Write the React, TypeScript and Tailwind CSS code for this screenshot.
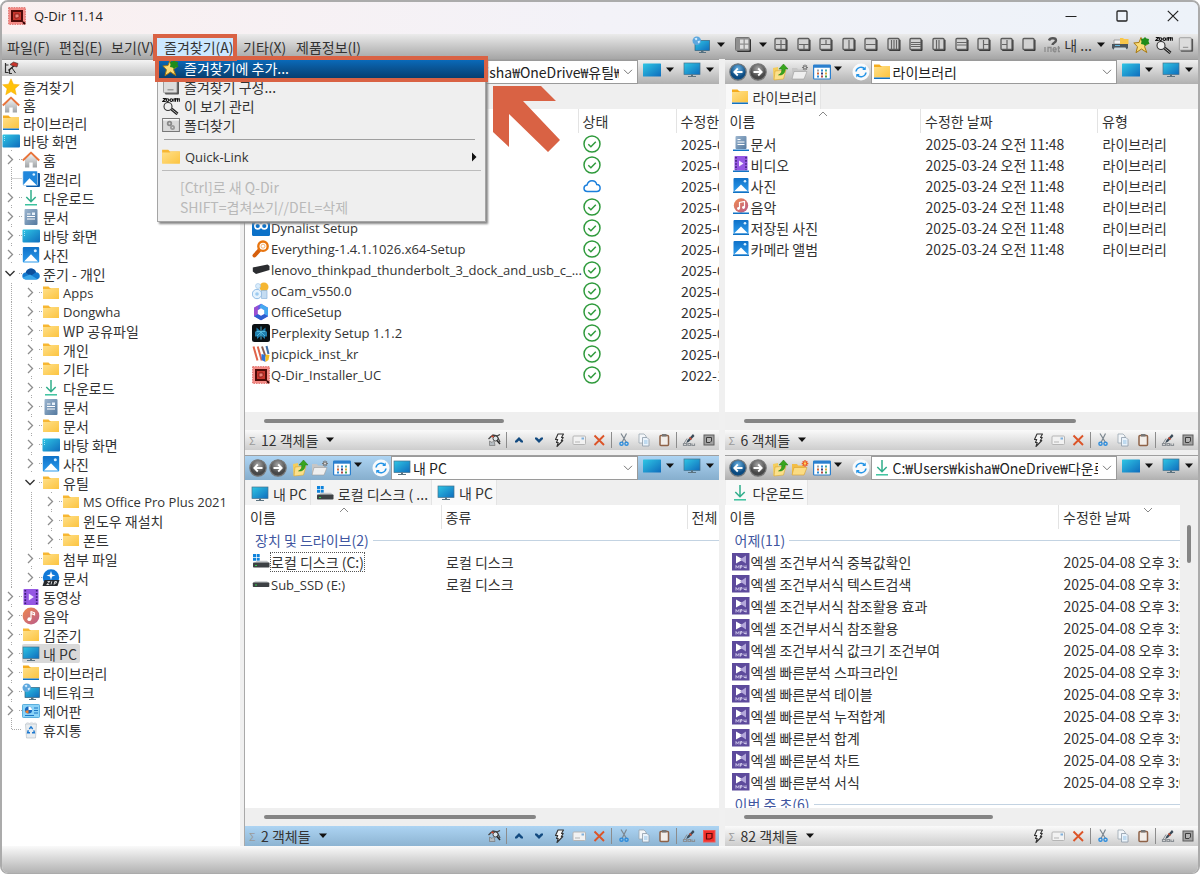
import type { ReactNode } from "react";
import clsx from "clsx";

const glyphs: Record<string, ReactNode> = {
  star: (
    <path d="M9 .8l2.400 5.400 6 .6-4.500 4 1.300 5.900L9 13.600l-5.200 3.100 1.300-5.900-4.500-4 6-.6z" fill="#ffc20a" stroke="#f7a800" strokeWidth=".5" />
  ),
  home: (
    <>
      <path d="M3 8v8.500h4.300v-5h3.400v5H15V8L9 2.500z" fill="url(#g-wall)" />
      <path d="M.8 9.500L9 1.600l8.200 7.900" fill="none" stroke="#e8743b" strokeWidth="2" strokeLinejoin="round" />
    </>
  ),
  folder: (
    <>
      <path d="M1 2.500h5.500l1.500 1.500H17V14H1z" fill="#f7b733" />
      <path d="M1 5h7l1-1h8v11H1z" fill="url(#g-folder)" />
    </>
  ),
  library: (
    <>
      <path d="M1 1.500h5.500L8 3h9v10H1z" fill="#f5ac1d" />
      <path d="M1 4h7l1-1h8v11.500H1z" fill="url(#g-folder)" />
      <path d="M1 14.500h16v1.500H1z" fill="#1273c4" />
    </>
  ),
  desktop: (
    <>
      <rect x=".5" y="2.500" width="17.500" height="13" rx="1" fill="url(#g-screen)" />
      <path d="M2 4.500h1M2 6.500h1M2 8.500h1" stroke="#bdf0ff" strokeWidth=".8" />
    </>
  ),
  panel: <rect x="0" y="2.500" width="18" height="13" rx=".6" fill="url(#g-screen)" />,
  monitor: (
    <>
      <rect x="1" y="2" width="16" height="11.500" fill="url(#g-screen)" stroke="#45718c" strokeWidth=".7" />
      <path d="M8 13.500h2v1.500h3v1H5v-1h3z" fill="#5c7380" />
    </>
  ),
  gallery: (
    <>
      <rect x="4" y="3" width="14" height="14" rx="1" fill="#0b5aa9" />
      <rect x=".8" y="1" width="14.700" height="14.500" rx="1" fill="#2087dc" stroke="#fff" strokeWidth=".5" />
      <path d="M1.200 15l6.300-6.800 7 6.800z" fill="#fff" />
      <circle cx="11.800" cy="4.500" r="1.300" fill="#d9f0ff" />
    </>
  ),
  picture: (
    <>
      <rect x=".8" y="1" width="16.400" height="15.500" rx="1" fill="url(#g-photo)" />
      <path d="M2 15.500l7-7.300 7 7.300z" fill="#fff" />
      <circle cx="13.300" cy="4.700" r="1.500" fill="#d9f0ff" />
    </>
  ),
  photolib: (
    <>
      <rect x="1.500" y="1" width="15" height="13.500" rx="1" fill="url(#g-photo)" />
      <path d="M2.500 14L9 7.500l6.500 6.500z" fill="#fff" />
      <circle cx="13" cy="4.300" r="1.300" fill="#d9f0ff" />
      <path d="M1 14.500h16v1.500H1z" fill="#1273c4" />
    </>
  ),
  download: (
    <>
      <path d="M9 1v11.500M4.300 8L9 12.700 13.700 8" fill="none" stroke="#2fae8b" strokeWidth="1.500" />
      <path d="M3 15.800h12" stroke="#3cc19e" strokeWidth="1.500" />
    </>
  ),
  doc: (
    <>
      <rect x="2.500" y="1" width="13" height="16" rx="1" fill="url(#g-doc)" />
      <path d="M5 6h3.500M5 8.500h8M5 11h8" stroke="#fff" strokeWidth="1.100" />
      <path d="M10 4.500h3v2.500h-3z" fill="#e8f1fa" />
    </>
  ),
  doclib: (
    <>
      <rect x="3.500" y="1" width="11" height="13" rx="1" fill="url(#g-doc)" />
      <path d="M5.500 4.500h3M5.500 7h7M5.500 9.500h7" stroke="#fff" />
      <path d="M1 14.500h16v1.500H1z" fill="#1273c4" />
    </>
  ),
  cloud: (
    <>
      <path d="M4.500 14.500C2 14.500.3 13 .3 11c0-2 1.500-3.300 3.400-3.400C4.600 5 6.600 3.600 9 3.600c2.300 0 4.300 1.400 5 3.600 2.200 0 3.800 1.700 3.800 3.700 0 2-1.600 3.600-3.800 3.600z" fill="#1479ce" />
      <path d="M3.700 7.600C4.600 5 6.600 3.600 9 3.600c2.300 0 4.300 1.400 5 3.600L8.500 11z" fill="#0d4f9c" />
      <path d="M4.500 14.500c-1.500 0-3-.6-3.800-2L8 9.500l7.500 4.800-1.500.2z" fill="#38a6ea" />
    </>
  ),
  zip: (
    <>
      <circle cx="9" cy="8.500" r="8.200" fill="#1179d8" />
      <path d="M9 2l1.100 3.400L13.500 6.500l-3.400 1.100L9 11 7.900 7.600 4.500 6.500l3.400-1.100z" fill="#fff" />
      <path d="M2.500 11h15l-2 6h-15z" fill="#25292d" />
      <path d="M5.500 12.500h2.300l-3 3h2.500M9.800 12.300l-.8 3.300M12 15.700l.8-3.200h1.700l-.3 1.600h-1.800" fill="none" stroke="#fff" strokeWidth=".8" />
    </>
  ),
  video: (
    <>
      <rect x="1.500" y="1" width="15" height="16" rx=".8" fill="#9557e3" />
      <path d="M3.300 2v14.500M14.700 2v14.500" stroke="#3b1c74" strokeWidth="1.700" strokeDasharray="1.600 1.500" />
      <path d="M6.800 5.500l5 3.500-5 3.500z" fill="#f3e9ff" />
    </>
  ),
  videolib: (
    <>
      <rect x="2.500" y="0" width="13" height="14.500" rx=".8" fill="#9557e3" />
      <path d="M4 1v13M14 1v13" stroke="#3b1c74" strokeWidth="1.500" strokeDasharray="1.600 1.500" />
      <path d="M7 4.500l4.500 3-4.500 3z" fill="#f3e9ff" />
      <path d="M1 14.500h16v1.500H1z" fill="#1273c4" />
    </>
  ),
  music: (
    <>
      <circle cx="9" cy="9" r="8.400" fill="url(#g-music)" />
      <path d="M9 4.200v7.800M9 4.500l3.500 1.300v2L9 6.500" fill="none" stroke="#fff" strokeWidth="1.200" />
      <circle cx="7.300" cy="12.200" r="1.900" fill="#fff" />
    </>
  ),
  musiclib: (
    <>
      <circle cx="9" cy="7.500" r="7.200" fill="url(#g-music)" />
      <path d="M7.500 10.500V4.500l5-1v6" fill="none" stroke="#fff" strokeWidth="1.200" />
      <circle cx="6.500" cy="10.500" r="1.400" fill="#fff" />
      <circle cx="11.500" cy="9.500" r="1.400" fill="#fff" />
      <path d="M1 14.500h16v1.500H1z" fill="#1273c4" />
    </>
  ),
  network: (
    <>
      <rect x="3" y="4.500" width="14.500" height="10" fill="url(#g-screen)" stroke="#33617d" strokeWidth=".7" />
      <path d="M9 14.500h2.500v1.500H14v1H7v-1h2z" fill="#55707f" />
      <circle cx="4.800" cy="4.800" r="4.300" fill="#5da7de" />
      <path d="M2.500 2.500l2-.8 1 1.300-1.500 1.500zM5.500 5.500l2-1 .5 1.500-1.500 1.500z" fill="#d6efff" />
    </>
  ),
  control: (
    <>
      <rect x=".5" y="2.500" width="17" height="13" rx=".8" fill="#8bd3f7" stroke="#3f9fd6" strokeWidth=".8" />
      <circle cx="6.500" cy="8" r="3.600" fill="#1769c0" />
      <path d="M6.500 8V4.400A3.600 3.600 0 0 1 10 8z" fill="#fff" />
      <path d="M6.500 8l-3.400 1A3.600 3.600 0 0 0 6.500 11.600z" fill="#f07f2d" />
      <path d="M12 6h4M12 8.500h4M12 11h4M3 13.500h9" stroke="#1b77c5" strokeWidth="1.100" />
    </>
  ),
  recycle: (
    <>
      <path d="M3.500 3h11l-1 14h-9z" fill="#e9edf0" stroke="#b9c2c8" strokeWidth=".7" />
      <path d="M4 2.500l1.500-1 2 .8 2-1 2 1 2-.6.800 1z" fill="#f6f7f8" stroke="#c4cbd0" strokeWidth=".5" />
      <path d="M7.300 8L9 5.800 10.700 8M11.800 9.300l.6 2.400H10M8 11.800H5.600l.7-2.500" fill="none" stroke="#1b78d0" strokeWidth="1.400" />
    </>
  ),
  diskc: (
    <>
      <path d="M1 1h3v3H1zM4.700 1h3v3h-3zM1 4.700h3v3H1zM4.700 4.700h3v3h-3z" fill="#0e83dc" />
      <path d="M3 9.500l2-1.700h10l2 2z" fill="#c5c8ca" />
      <rect x="1" y="9.500" width="16.500" height="5" rx=".8" fill="#3d4144" />
      <path d="M3 12.500h2" stroke="#35d04c" strokeWidth="1.200" />
    </>
  ),
  diske: (
    <>
      <path d="M1 8l2-1.700h12L17 8z" fill="#c5c8ca" />
      <rect x=".8" y="7.500" width="16.500" height="4.500" rx=".8" fill="#3d4144" />
      <path d="M3 10h2" stroke="#35d04c" strokeWidth="1.200" />
    </>
  ),
  mp4: (
    <>
      <rect x="0" y="0" width="17.500" height="17.500" fill="#5d4a9c" />
      <path d="M4 2.500l7 4-7 4z" fill="#fff" />
      <path d="M14 2.500v8l-6-4z" fill="#b3a7da" />
      <path d="M4 15.500v-3l1.500 2 1.500-2v3M8.500 15.500v-3H10v1.500H8.500M12 12.500v2h2.500M14 12.300v3.200" fill="none" stroke="#d4cdec" strokeWidth=".9" />
    </>
  ),
  qdir: (
    <>
      <rect x=".7" y=".7" width="16.600" height="16.600" fill="#f58d88" stroke="#dc6a64" strokeDasharray="1.500 1" />
      <rect x="4" y="4" width="10" height="10" fill="#c8372f" stroke="#4f0b08" strokeWidth="2" />
      <path d="M7 7h4v2.500L9.500 11H7z" fill="#f0857d" stroke="#7c1813" strokeWidth=".8" />
      <path d="M15 15l2 2" stroke="#300" strokeWidth="2" />
    </>
  ),
  dynalist: (
    <>
      <rect x="0" y="0" width="18" height="17" rx="1.500" fill="#0c71c8" />
      <circle cx="5.700" cy="7" r="2.900" fill="none" stroke="#fff" strokeWidth="1.600" />
      <circle cx="12.300" cy="7" r="2.900" fill="none" stroke="#fff" strokeWidth="1.600" />
    </>
  ),
  everything: (
    <>
      <path d="M7.500 10L2.500 15.500" stroke="#d65f0c" strokeWidth="4" strokeLinecap="round" />
      <circle cx="11" cy="6.200" r="4.700" fill="#fff" stroke="#e8750f" strokeWidth="2.400" />
      <circle cx="11" cy="6.200" r="2" fill="none" stroke="#f2a25c" strokeWidth=".8" />
    </>
  ),
  dock: <path d="M.8 6.500L15.500 3.500l2 1.500v4L4 13 .8 10.500z" fill="#2b2d30" />,
  ocam: (
    <>
      <circle cx="12" cy="5" r="4.500" fill="#f5b632" />
      <circle cx="6" cy="4" r="2.500" fill="#d9ecfb" stroke="#9fc4e6" strokeWidth=".6" />
      <circle cx="5" cy="12" r="4.700" fill="#e4f2fd" stroke="#86b5e2" strokeWidth=".9" />
      <circle cx="5" cy="12" r="1.800" fill="#9ccaf0" />
      <path d="M9.500 8.500h5.500v8H9.500z" fill="#c4dcf2" stroke="#8fb6dc" strokeWidth=".7" />
    </>
  ),
  office: (
    <>
      <path d="M9 .8l7 4v8.400l-7 4-7-4V4.800z" fill="#6a5be0" />
      <path d="M9 .8l7 4v8.400l-4-2.200V7L7.500 4.500z" fill="#46a9f0" />
      <path d="M2 13.200l7 4 7-4-4-2.200-3 1.700-3-1.700z" fill="#2d5fcf" />
      <path d="M2 13.200V4.800L6 2.500v8.500z" fill="#9a4fd0" />
      <path d="M9 5.300L12.200 7.200v3.700L9 12.700l-3.200-1.800V7.200z" fill="#fff" />
    </>
  ),
  perplexity: (
    <>
      <rect x="0" y="0" width="18" height="18" rx="2.500" fill="#0b1114" />
      <path d="M4.500 3.500L9 7.500l4.500-4v4H15v5h-2V15l-4-3.500L5 15v-2.500H3v-5h1.500z" fill="#1f7fae" />
      <path d="M9 2.500v13M4.500 7.500h9M5 12l4-4 4 4" fill="none" stroke="#59bde0" strokeWidth=".9" />
    </>
  ),
  picpick: (
    <>
      <path d="M1.500 1.500l4 14M5.700 1.500l4 14" stroke="#e0644a" strokeWidth="2" />
      <path d="M10 1.500l3.500 10" stroke="#8a5f52" strokeWidth="2" />
      <path d="M14.500 1l2 8" stroke="#3f6ea8" strokeWidth="2" />
      <path d="M9.500 9l4 1v7l-4-2z" fill="#2f74d8" />
      <path d="M13.500 9.500l4 .5-1 5-3 2z" fill="#f4bd1f" />
    </>
  ),
  check: (
    <>
      <circle cx="9" cy="9" r="8" fill="#fff" stroke="#2f9a3c" strokeWidth="1.500" />
      <path d="M5.300 9.300l2.600 2.500 4.900-5" fill="none" stroke="#2f9a3c" strokeWidth="1.500" />
    </>
  ),
  online: (
    <path d="M4.500 14.500c-2 0-3.500-1.300-3.500-3.200 0-1.800 1.300-3 3-3.200C4.700 5.500 6.600 3.800 9 3.800c2.300 0 4.200 1.500 4.800 3.800 1.900.1 3.300 1.500 3.300 3.400 0 2-1.500 3.500-3.500 3.500z" fill="#fff" stroke="#1b7fdc" strokeWidth="1.500" />
  ),
  back: (
    <>
      <circle cx="9" cy="9" r="8.200" fill="url(#g-orb)" stroke="#70767b" strokeWidth="1.200" />
      <path d="M13.500 9h-7M8.800 5.500L5.300 9l3.500 3.500" fill="none" stroke="#fff" strokeWidth="1.800" />
    </>
  ),
  backgray: (
    <>
      <circle cx="9" cy="9" r="8.200" fill="url(#g-orbgray)" stroke="#777" strokeWidth="1.200" />
      <path d="M13.500 9h-7M8.800 5.500L5.300 9l3.500 3.500" fill="none" stroke="#fff" strokeWidth="1.800" />
    </>
  ),
  forward: (
    <>
      <circle cx="9" cy="9" r="8.200" fill="url(#g-orbgray)" stroke="#777" strokeWidth="1.200" />
      <path d="M4.500 9h7M9.200 5.500L12.700 9l-3.500 3.500" fill="none" stroke="#fff" strokeWidth="1.800" />
    </>
  ),
  up: (
    <>
      <path d="M2 5l5-1 1.500 12L2.500 17z" fill="#f5cd5b" />
      <path d="M4 8l11-1-2.500 9-9.500 1z" fill="#fbe08a" stroke="#d8a735" strokeWidth=".6" />
      <path d="M7.500 12c2.500-1 3.500-3 3.300-6H8l4.500-5L17 6h-2.800c0 4-2.500 6.500-6.700 6z" fill="#38a51e" stroke="#1e7a10" strokeWidth=".5" />
    </>
  ),
  newgray: (
    <>
      <path d="M1 5h5l1 1.500h6V15H1z" fill="#c6c6c6" />
      <path d="M3 8.500h13L13 16H1z" fill="#efefef" stroke="#9a9a9a" strokeWidth=".6" />
      <path d="M14 1.500v6M11 4.500h6M12 2.500l4 4M16 2.500l-4 4" stroke="#777" strokeWidth="1.100" />
      <circle cx="14" cy="4.500" r="1" fill="#ddd" />
    </>
  ),
  newfolder: (
    <>
      <path d="M1 5h5l1 1.500h6V15H1z" fill="#f3bd44" />
      <path d="M3 8.500h13L13 16H1z" fill="#fbdc83" stroke="#d89f2c" strokeWidth=".6" />
      <path d="M14 1v7M10.700 4.500h6.600M11.700 2.200l4.600 4.600M16.300 2.200l-4.600 4.600" stroke="#ec5a21" strokeWidth="1.300" />
      <circle cx="14" cy="4.500" r="1.200" fill="#ffd25b" />
    </>
  ),
  view: (
    <>
      <rect x=".6" y="2" width="16.800" height="14" rx=".8" fill="#fff" stroke="#2a7fce" strokeWidth="1.200" />
      <path d="M.6 2h16.800v2.700H.6z" fill="#2a7fce" />
      <path d="M4 6.500h2v2H4z" fill="#9aa3ad" />
      <path d="M8 6.500h2v2H8z" fill="#2d8ad6" />
      <path d="M12 6.500h2v2h-2z" fill="#48a7a0" />
      <path d="M4 9.500h2v2H4z" fill="#d06434" />
      <path d="M8 9.500h2v2H8z" fill="#333d7a" />
      <path d="M12 9.500h2v2h-2z" fill="#d7a63c" />
      <path d="M4 12.500h2v2H4z" fill="#2d8ad6" />
      <path d="M8 12.500h2v2H8z" fill="#b04444" />
      <path d="M12 12.500h2v2h-2z" fill="#3f9d54" />
    </>
  ),
  refresh: (
    <>
      <circle cx="9" cy="9" r="8.500" fill="#f8fafc" />
      <path d="M4 8.500a5 5 0 0 1 9-2.200M14 9.500a5 5 0 0 1-9 2.200" fill="none" stroke="#2494e6" strokeWidth="1.500" />
      <path d="M13.700 3.500v3.500h-3.500zM4.300 14.500V11h3.500z" fill="#2494e6" />
    </>
  ),
  find: (
    <>
      <path d="M3.500 8L8 4l4 1 3-1.500M12 5l3 6M5 6l4-2" stroke="#444" strokeWidth="1.300" fill="none" />
      <circle cx="10.500" cy="7.500" r="2.500" fill="#dfe6ea" stroke="#333" strokeWidth=".9" />
      <path d="M12 9.500l3 3.500" stroke="#222" strokeWidth="1.400" />
      <path d="M4.500 14.500V10l2.500 1.500L9 9.500l1 5z" fill="#b4bbc0" stroke="#777" strokeWidth=".7" />
      <path d="M6.500 5l2 1" stroke="#c8452c" strokeWidth="1.600" />
    </>
  ),
  chevup: <path d="M5 11.500V10l4-4 4 4v1.500H11L9 9.500l-2 2z" fill="#124a80" />,
  chevdown: <path d="M5 6.500V8l4 4 4-4V6.500H11L9 8.500l-2-2z" fill="#124a80" />,
  bolt: (
    <path d="M8 3h5.500l-2 3.500h1.800l-2 3h1.500L7 15.500l1.200-4H6.500L7.700 8.500H5.500z" fill="#f5f5f5" stroke="#333" strokeWidth="1.100" strokeLinejoin="round" />
  ),
  mail: (
    <>
      <rect x="3" y="5" width="12.500" height="8.500" rx="1" fill="#f2f2f2" stroke="#b5b5b5" />
      <path d="M11.500 6.500h2.500v2h-2.500z" fill="#7fb0dc" />
      <path d="M5 11h5" stroke="#b5b5b5" />
    </>
  ),
  cross: <path d="M4.500 4.500l9.500 9.500M14 4.500L4.500 14" stroke="#dc5428" strokeWidth="1.900" />,
  cut: (
    <>
      <path d="M6 2.500l5.500 9M11.500 2.500L7 11.500" stroke="#7c8790" strokeWidth="1.200" />
      <circle cx="6.500" cy="12.700" r="1.600" fill="none" stroke="#2a8bdc" strokeWidth="1.400" />
      <circle cx="11.500" cy="12.700" r="1.600" fill="none" stroke="#2a8bdc" strokeWidth="1.400" />
    </>
  ),
  copy: (
    <>
      <path d="M4 3h5l2 2v7H4z" fill="#f3f6f9" stroke="#9ba7b1" strokeWidth=".8" />
      <path d="M7.500 6.500h4.500l2 2V15H7.500z" fill="#eaf3fb" stroke="#8d9ba8" strokeWidth=".8" />
      <path d="M9 10h3.500M9 12h3.500" stroke="#7db4e0" strokeWidth=".8" />
    </>
  ),
  paste: (
    <>
      <rect x="5" y="4.500" width="8.500" height="10" rx="1" fill="#f2eeea" stroke="#8e6247" strokeWidth="1.500" />
      <rect x="7" y="3" width="4.500" height="2.500" fill="#777" />
    </>
  ),
  pen: (
    <>
      <path d="M13 3L7.500 9l-1.300 3 2.800-1.300L14.500 5z" fill="#3a4a58" />
      <path d="M9.500 6.500l2 2" stroke="#d2492e" strokeWidth="1.500" />
      <path d="M7 7.500l-3 5" stroke="#8a8f94" strokeWidth="1" />
      <path d="M3.500 14.500v-2h3v2zM8 14.500v-2h2.500v2zM12 12.500v2h2.500v-2" stroke="#8a8f94" strokeWidth="1.200" fill="none" />
    </>
  ),
  box: (
    <>
      <rect x="4" y="4" width="10" height="10" fill="#a2a2a2" stroke="#5c5c5c" />
      <path d="M6.500 6.500h5v3.500L10 11.500H6.500z" fill="#b4b4b4" stroke="#3c3c3c" />
    </>
  ),
  boxred: (
    <>
      <rect x="3.500" y="3.500" width="11.500" height="11.500" fill="#f3312c" stroke="#ef5b56" />
      <path d="M6.500 6.500H12v4.500L10 12H6.500z" fill="none" stroke="#5f0907" strokeWidth="1.200" />
    </>
  ),
  staradd: (
    <>
      <path d="M8 1.500l1.800 5 6.200.3-4.500 3.700 2.300 6-5.300-3.500-5.500 3.700 1.500-6L.8 7l5.200-.5z" fill="#fbdc78" stroke="#a8780f" strokeWidth="1" />
      <path d="M12 1l1.500 1.500L16 3l-.5 2.500 1 2.500-3 .5L12 10l-1.500-1.500L8 8l.5-2.500L8 3l2.500-.5z" fill="#1f8c1b" />
    </>
  ),
  pad: (
    <>
      <rect x="3" y="2" width="14" height="14.500" rx="1" fill="#555" />
      <rect x="1.500" y=".8" width="13.500" height="14" rx="1" fill="#dcdcdc" stroke="#8c8c8c" strokeWidth=".8" />
      <path d="M5.500 11h6v1.500h-6z" fill="#9c9c9c" />
    </>
  ),
  zoom: (
    <>
      <path d="M.8 1.500h2.800L.8 4.500h3M5.500 1.700a1.300 1.400 0 1 0 .1 0M9.300 1.700a1.300 1.400 0 1 0 .1 0M12 4.800V2l1.500-.3v3M13.500 2l2-.3v3M15.500 2l1.800-.2v3" fill="none" stroke="#111" strokeWidth="1.100" />
      <circle cx="6" cy="9.500" r="4" fill="#eee" stroke="#333" strokeWidth="1.100" />
      <path d="M9.500 12l6 5" stroke="#222" strokeWidth="3" />
      <path d="M9.500 12l6 5" stroke="#aaa" strokeWidth="1" />
    </>
  ),
  gears: (
    <>
      <rect x=".6" y="2.500" width="16.800" height="13" fill="#d9d9d9" stroke="#777" />
      <path d="M1 3h16v1.500H1z" fill="#f8f8f8" />
      <circle cx="7.500" cy="7.500" r="1.800" fill="none" stroke="#8a8a8a" strokeWidth="1.800" />
      <circle cx="10.500" cy="11.500" r="1.600" fill="none" stroke="#9a9a9a" strokeWidth="1.800" />
    </>
  ),
  inet: (
    <>
      <path d="M6 4.500c1-3 7-3 7 0 0 2.500-3.500 2-3.500 4.500" fill="none" stroke="#555" strokeWidth="2.400" />
      <path d="M2 11v5M5 16v-4.500h3V16M10 13.800h3.200c0-3-3.200-3-3.200 0 0 2 2 2.300 3.200 1.500M15.500 10v5.500h1.500M14.500 12H17" fill="none" stroke="#8b8b8b" strokeWidth="1.300" />
    </>
  ),
  printer: (
    <>
      <path d="M3 4h8v4H3z" fill="#f4f4f4" stroke="#888" strokeWidth=".7" />
      <path d="M9 2h3l1 1h4.500v5H9z" fill="#f8c64a" />
      <path d="M1 8h16v4l-2 2H3l-2-2z" fill="#4b565e" />
      <path d="M3.500 11.500h11l1.500 2.500H2.500z" fill="#cfd8dd" />
      <path d="M4 9.500h5" stroke="#62b8e0" />
    </>
  ),
};

function Icon({ name, size = "size-[18px]" }: { name: string; size?: string }) {
  return (
    <svg viewBox="0 0 18 18" className={clsx("shrink-0", size)} aria-hidden="true">
      {glyphs[name]}
    </svg>
  );
}

function Caret() {
  return (
    <svg viewBox="0 0 10 6" className="h-1.5 w-2.5 shrink-0" aria-hidden="true">
      <path d="M1 .5h8L5 5z" fill="#111" />
    </svg>
  );
}

function Gradients() {
  return (
    <svg className="absolute size-0" aria-hidden="true">
      <defs>
        <linearGradient id="g-wall" x2="0" y2="1">
          <stop stopColor="#f4f4f4" />
          <stop offset="1" stopColor="#9fa3a6" />
        </linearGradient>
        <linearGradient id="g-folder" x2="1" y2="1">
          <stop stopColor="#ffe08a" />
          <stop offset="1" stopColor="#fcc440" />
        </linearGradient>
        <linearGradient id="g-screen" x2="1" y2="1">
          <stop stopColor="#2fc6e4" />
          <stop offset="1" stopColor="#0f6cbd" />
        </linearGradient>
        <linearGradient id="g-photo" x2="0" y2="1">
          <stop stopColor="#0f71c8" />
          <stop offset="1" stopColor="#2c9bec" />
        </linearGradient>
        <linearGradient id="g-doc" x2="1" y2="1">
          <stop stopColor="#9db6cf" />
          <stop offset="1" stopColor="#54799f" />
        </linearGradient>
        <linearGradient id="g-music" x2="1" y2="1">
          <stop stopColor="#f08a4e" />
          <stop offset="1" stopColor="#b95a8c" />
        </linearGradient>
        <radialGradient id="g-orb" cy=".3">
          <stop stopColor="#6db4e4" />
          <stop offset="1" stopColor="#0b4a80" />
        </radialGradient>
        <radialGradient id="g-orbgray" cy=".3">
          <stop stopColor="#a8a8a8" />
          <stop offset="1" stopColor="#484848" />
        </radialGradient>
      </defs>
    </svg>
  );
}

type Twist = "closed" | "open" | "leaf" | "last";

interface TreeRow {
  label: string;
  icon: string;
  depth: number;
  twist?: Twist;
  selected?: boolean;
}

const quickRows = [
  { label: "즐겨찾기", icon: "star" },
  { label: "홈", icon: "home" },
  { label: "라이브러리", icon: "library" },
  { label: "바탕 화면", icon: "desktop" },
];

const treeRows: TreeRow[] = [
  { label: "홈", icon: "home", depth: 1 },
  { label: "갤러리", icon: "gallery", depth: 1, twist: "leaf" },
  { label: "다운로드", icon: "download", depth: 1 },
  { label: "문서", icon: "doc", depth: 1 },
  { label: "바탕 화면", icon: "desktop", depth: 1 },
  { label: "사진", icon: "picture", depth: 1 },
  { label: "준기 - 개인", icon: "cloud", depth: 1, twist: "open" },
  { label: "Apps", icon: "folder", depth: 2 },
  { label: "Dongwha", icon: "folder", depth: 2 },
  { label: "WP 공유파일", icon: "folder", depth: 2 },
  { label: "개인", icon: "folder", depth: 2 },
  { label: "기타", icon: "folder", depth: 2 },
  { label: "다운로드", icon: "download", depth: 2 },
  { label: "문서", icon: "doc", depth: 2 },
  { label: "문서", icon: "folder", depth: 2 },
  { label: "바탕 화면", icon: "desktop", depth: 2 },
  { label: "사진", icon: "picture", depth: 2 },
  { label: "유틸", icon: "folder", depth: 2, twist: "open" },
  { label: "MS Office Pro Plus 2021", icon: "folder", depth: 3 },
  { label: "윈도우 재설치", icon: "folder", depth: 3 },
  { label: "폰트", icon: "folder", depth: 3 },
  { label: "첨부 파일", icon: "folder", depth: 2 },
  { label: "문서", icon: "zip", depth: 2 },
  { label: "동영상", icon: "video", depth: 1 },
  { label: "음악", icon: "music", depth: 1 },
  { label: "김준기", icon: "folder", depth: 1 },
  { label: "내 PC", icon: "monitor", depth: 1, selected: true },
  { label: "라이브러리", icon: "library", depth: 1 },
  { label: "네트워크", icon: "network", depth: 1 },
  { label: "제어판", icon: "control", depth: 1 },
  { label: "휴지통", icon: "recycle", depth: 1, twist: "last" },
];

const isLatin = (text: string) => /^[\x20-\x7e]+$/.test(text);

function Label({ text }: { text: string }) {
  return (
    <span className={clsx("whitespace-pre", isLatin(text) && "font-['Open_Sans','Noto_Sans',sans-serif] text-[13px]")}>
      {text}
    </span>
  );
}

function Twisty({ kind }: { kind: Twist }) {
  const dotted = { stroke: "#a9a9a9", strokeDasharray: "1 1" };
  return (
    <svg viewBox="0 0 20 19" className="h-[19px] w-5 shrink-0" fill="none" aria-hidden="true">
      {kind === "closed" && (
        <>
          <path d="M9.500 0v2M9.500 17v2M17 9.500h3" {...dotted} />
          <path d="M6 5l4.500 4.500L6 14" stroke="#8d8d8d" strokeWidth="1.300" />
        </>
      )}
      {kind === "open" && (
        <>
          <path d="M17 9.500h3" {...dotted} />
          <path d="M3.500 7L8 11.500 12.500 7" stroke="#333" strokeWidth="1.400" />
        </>
      )}
      {kind === "leaf" && <path d="M9.500 0v19M9.500 9.500H20" {...dotted} />}
      {kind === "last" && <path d="M9.500 0v9.500H20" {...dotted} />}
    </svg>
  );
}

function Guide() {
  return (
    <svg viewBox="0 0 20 19" className="h-[19px] w-5 shrink-0" aria-hidden="true">
      <path d="M9.500 0v19" stroke="#a9a9a9" strokeDasharray="1 1" />
    </svg>
  );
}

function Sidebar() {
  return (
    <aside className="flex w-[243px] shrink-0 flex-col overflow-hidden border-r border-[#a9a9a9] bg-[#f0f0f0] pr-1">
      <div className="flex h-[17px] items-center border-t border-[#9a9a9a] bg-gradient-to-b from-[#f4f4f4] to-[#c4c4c4] px-0.5">
        <svg viewBox="0 0 16 14" className="h-3.5 w-4" fill="none" aria-hidden="true">
          <path d="M1.500 2v10M1.500 4h3M1.500 11.500h3M5.500 8v4.500h2.500" stroke="#333" strokeWidth="1.200" />
          <path d="M4.500 9.500L12 3" stroke="#222" strokeWidth="1.500" />
          <path d="M6 3.500L9.500 1 14 2.500 13 6 9 5z" fill="#c8332a" stroke="#333" strokeWidth=".6" />
          <path d="M8 7l3.500 5" stroke="#222" />
        </svg>
      </div>
      <div className="min-h-0 flex-1 bg-white pt-0.5">
        <ul>
          {quickRows.map((row) => (
            <li key={row.label} className="flex h-[18px] items-center gap-[3px]">
              <Icon name={row.icon} />
              <Label text={row.label} />
            </li>
          ))}
        </ul>
        <ul role="tree" aria-label="폴더">
          {treeRows.map((row, index) => (
            <li key={index} role="treeitem" aria-level={row.depth} aria-selected={!!row.selected} className="flex h-[19px] items-center">
              {row.depth > 1 && <Guide />}
              {row.depth > 2 && <Guide />}
              <Twisty kind={row.twist ?? "closed"} />
              <span className={clsx("flex h-[19px] items-center gap-[3px] pr-[3px]", row.selected && "rounded-xs bg-[#d9d9d9]")}>
                <Icon name={row.icon} />
                <Label text={row.label} />
              </span>
            </li>
          ))}
        </ul>
      </div>
    </aside>
  );
}

interface Column {
  label: string;
  width?: string;
  sort?: "asc" | "desc";
}

interface Entry {
  group?: string;
  icon?: string;
  focused?: boolean;
  cells?: ReactNode[];
}

interface PaneProps {
  id: string;
  active?: boolean;
  canGoBack?: boolean;
  newFolder?: boolean;
  path: string;
  pathIcon: string;
  tabs: { label: string; icon: string; current?: boolean }[];
  columns: Column[];
  entries: Entry[];
  tall?: boolean;
  vertical?: boolean;
  scroll: string;
  count: string;
  extraTools?: boolean;
}

function NavBar({ id, active, canGoBack, newFolder, path, pathIcon }: PaneProps) {
  const button = "flex w-5 shrink-0 items-center justify-center";
  return (
    <div
      className={clsx(
        "flex h-[25px] shrink-0 items-center border-t border-[#9f9f9f] bg-gradient-to-b",
        active ? "from-[#add4f3] to-[#86aecd]" : "from-[#f0f0f0] to-[#b0b0b0]",
      )}
    >
      <div className="flex w-[146px] shrink-0 items-center pl-[3px]">
        <button type="button" aria-label="뒤로" className={button}><Icon name={canGoBack ? "back" : "backgray"} /></button>
        <button type="button" aria-label="앞으로" className={button}><Icon name="forward" /></button>
        <button type="button" aria-label="위로" className={clsx(button, "ml-0.5")}><Icon name="up" /></button>
        <button type="button" aria-label="새 폴더" className={button}><Icon name={newFolder ? "newfolder" : "newgray"} /></button>
        <button type="button" aria-label="보기" className="ml-[3px] flex shrink-0 items-center gap-0.5">
          <Icon name="view" />
          <span className="pb-1.5"><Caret /></span>
        </button>
        <button type="button" aria-label="새로 고침" className="mr-px ml-auto shrink-0"><Icon name="refresh" /></button>
      </div>
      <div className="flex h-6 min-w-0 flex-1 items-center border border-[#9a9a9a] bg-white pl-px">
        <Icon name={pathIcon} />
        <input
          id={id}
          aria-label="주소"
          defaultValue={path}
          className="h-5 min-w-0 flex-1 bg-transparent pl-0.5 text-[#222] outline-none"
        />
        <button type="button" aria-label="주소 목록" className="flex w-[18px] shrink-0 justify-center">
          <svg viewBox="0 0 10 6" className="h-1.5 w-2.5" fill="none" aria-hidden="true">
            <path d="M1 .8l4 4 4-4" stroke="#777" />
          </svg>
        </button>
      </div>
      <div className="flex w-[81px] shrink-0 items-center gap-1 pb-1 pl-[5px]">
        <button type="button" aria-label="바탕 화면" className="flex items-center gap-1"><Icon name="panel" /><Caret /></button>
        <button type="button" aria-label="내 PC" className="ml-1 flex items-center gap-1"><Icon name="monitor" /><Caret /></button>
      </div>
    </div>
  );
}

function StatusBar({ count, active, extraTools }: PaneProps) {
  const tool = (name: string, label: string) => (
    <button type="button" aria-label={label} className="flex w-5 justify-center"><Icon name={name} /></button>
  );
  const divider = <span className="mx-0.5 h-4 w-px bg-[#8c8c8c]" />;
  return (
    <div
      className={clsx(
        "flex h-5 shrink-0 items-center bg-gradient-to-b",
        active ? "from-[#add4f3] to-[#8db4d2]" : "from-[#fafafa] to-[#cdcdcd]",
      )}
    >
      <span className="w-4 pl-1 text-[11px] text-[#9a9a9a]">Σ</span>
      <button type="button" className="flex items-center gap-[7px]">{count}<Caret /></button>
      <div className="ml-auto flex items-center">
        {extraTools && (
          <>
            {tool("find", "찾기")}
            {divider}
            {tool("chevup", "위")}
            {tool("chevdown", "아래")}
          </>
        )}
        {tool("bolt", "실행")}
        {tool("mail", "메일")}
        {tool("cross", "삭제")}
        {divider}
        {tool("cut", "잘라내기")}
        {tool("copy", "복사")}
        {tool("paste", "붙여넣기")}
        {divider}
        {tool("pen", "이름 바꾸기")}
        {tool(active ? "boxred" : "box", "창")}
      </div>
    </div>
  );
}

function FileTable({ columns, entries, tall }: PaneProps) {
  const rowHeight = tall ? "h-[22px]" : "h-[21px]";
  return (
    <table className="w-full table-fixed border-collapse text-left">
      <thead>
        <tr className="h-6">
          {columns.map((column, index) => (
            <th
              key={column.label}
              scope="col"
              className={clsx(
                "relative p-0 font-normal whitespace-nowrap",
                column.width,
                index > 0 ? "border-l border-[#e3e3e3] pl-1" : "pl-[5px]",
              )}
            >
              {column.label}
              {column.sort && (
                <svg viewBox="0 0 10 6" fill="none" aria-hidden="true" className="absolute top-0.5 left-1/2 -ml-1 h-1.5 w-2.5">
                  <path d={column.sort === "asc" ? "M1 5l4-4 4 4" : "M1 1l4 4 4-4"} stroke="#888" />
                </svg>
              )}
            </th>
          ))}
        </tr>
      </thead>
      <tbody>
        {entries.map((entry, index) => (
          <tr key={index} className={rowHeight}>
            {entry.group ? (
              <td colSpan={columns.length} className="p-0 pl-2.5">
                <span className="flex items-center gap-1 whitespace-nowrap text-[#40569f]">
                  {entry.group}
                  <span className="h-px flex-1 bg-[#c3d3e2]" />
                </span>
              </td>
            ) : (
              entry.cells?.map((cell, at) => (
                <td key={at} className={clsx("p-0 whitespace-nowrap", at === 0 ? "pl-[7px]" : "pl-[5px]")}>
                  {at === 0 ? (
                    <span className="flex items-center gap-px">
                      {entry.icon && <Icon name={entry.icon} />}
                      <span className={clsx(entry.focused && "outline-1 outline-dotted outline-[#555]")}>
                        {typeof cell === "string" ? <Label text={cell} /> : cell}
                      </span>
                    </span>
                  ) : (
                    cell
                  )}
                </td>
              ))
            )}
          </tr>
        ))}
      </tbody>
    </table>
  );
}

function Pane(props: PaneProps) {
  const { tabs, scroll, vertical } = props;
  return (
    <section className="flex min-h-0 min-w-0 flex-col overflow-hidden">
      <NavBar {...props} />
      <div className="flex h-[25px] shrink-0 items-stretch bg-[#efefef] pl-px">
        {tabs.map((tab, index) => (
          <button
            key={index}
            type="button"
            className={clsx(
              "flex items-center gap-1 border-r border-[#e4e4e4] pr-[3px] pl-[5px] whitespace-nowrap",
              tab.current ? "bg-[#f9f9f9]" : "bg-[#f3f3f3] pt-0.5",
            )}
          >
            <Icon name={tab.icon} />
            {tab.label}
          </button>
        ))}
      </div>
      <div className="flex min-h-0 flex-1">
        <div className="min-w-0 flex-1 overflow-hidden bg-white">
          <FileTable {...props} />
        </div>
        {vertical && (
          <div className="flex w-[18px] shrink-0 justify-center bg-[#efefef] pt-5">
            <span className="h-[38px] w-1 rounded-full bg-[#858585]" />
          </div>
        )}
      </div>
      <div className="flex h-[18px] shrink-0 items-center bg-[#efefef] pl-[19px]">
        <span className={clsx("h-1 rounded-full bg-[#858585]", scroll)} />
      </div>
      <StatusBar {...props} />
    </section>
  );
}

const synced = <Icon name="check" />;

const installers: Entry[] = [
  { cells: ["", synced, "2025-0"] },
  { cells: ["", synced, "2025-0"] },
  { cells: ["", <Icon name="online" />, "2025-0"] },
  { cells: ["", synced, "2025-0"] },
  { icon: "dynalist", cells: ["Dynalist Setup", synced, "2025-0"] },
  { icon: "everything", cells: ["Everything-1.4.1.1026.x64-Setup", synced, "2025-0"] },
  { icon: "dock", cells: ["lenovo_thinkpad_thunderbolt_3_dock_and_usb_c_...", synced, "2025-0"] },
  { icon: "ocam", cells: ["oCam_v550.0", synced, "2025-0"] },
  { icon: "office", cells: ["OfficeSetup", synced, "2025-0"] },
  { icon: "perplexity", cells: ["Perplexity Setup 1.1.2", synced, "2025-0"] },
  { icon: "picpick", cells: ["picpick_inst_kr", synced, "2025-0"] },
  { icon: "qdir", cells: ["Q-Dir_Installer_UC", synced, "2022-1"] },
];

const libraries: Entry[] = [
  ["doclib", "문서"],
  ["videolib", "비디오"],
  ["photolib", "사진"],
  ["musiclib", "음악"],
  ["photolib", "저장된 사진"],
  ["photolib", "카메라 앨범"],
].map(([icon, name]) => ({ icon, cells: [name, "2025-03-24 오전 11:48", "라이브러리"] }));

const drives: Entry[] = [
  { group: "장치 및 드라이브(2)" },
  { icon: "diskc", focused: true, cells: ["로컬 디스크 (C:)", "로컬 디스크", ""] },
  { icon: "diske", cells: ["Sub_SSD (E:)", "로컬 디스크", ""] },
];

const downloads: Entry[] = [
  { group: "어제(11)" },
  ...[
    ["엑셀 조건부서식 중복값확인", "3:2"],
    ["엑셀 조건부서식 텍스트검색", "3:2"],
    ["엑셀 조건부서식 참조활용 효과", "3:2"],
    ["엑셀 조건부서식 참조활용", "3:2"],
    ["엑셀 조건부서식 값크기 조건부여", "3:1"],
    ["엑셀 빠른분석 스파크라인", "3:0"],
    ["엑셀 빠른분석 테이블", "3:0"],
    ["엑셀 빠른분석 누적합계", "3:0"],
    ["엑셀 빠른분석 합계", "3:0"],
    ["엑셀 빠른분석 차트", "3:0"],
    ["엑셀 빠른분석 서식", "3:0"],
  ].map(([name, time]) => ({ icon: "mp4", cells: [name, `2025-04-08 오후 ${time}`] })),
  { group: "이번 주 초(6)" },
];

function TitleBar() {
  return (
    <header className="flex h-8 shrink-0 items-center bg-gradient-to-r from-[#faf0f0] via-[#f3f2f8] to-[#edf2f9] pb-1 pl-1.5">
      <Icon name="qdir" />
      <h1 className="ml-2 flex-1 font-['Open_Sans','Noto_Sans',sans-serif] text-[13px] text-[#222]">Q-Dir 11.14</h1>
      <button type="button" aria-label="최소화" className="flex w-[51px] justify-center">
        <svg viewBox="0 0 12 12" className="size-3" aria-hidden="true"><path d="M.5 6.500h11" stroke="#222" /></svg>
      </button>
      <button type="button" aria-label="최대화" className="flex w-[51px] justify-center">
        <svg viewBox="0 0 12 12" className="size-3" aria-hidden="true"><rect x="1" y="1" width="10" height="10" rx="1" fill="none" stroke="#222" strokeWidth="1.300" /></svg>
      </button>
      <button type="button" aria-label="닫기" className="flex w-[51px] justify-center">
        <svg viewBox="0 0 12 12" className="size-3" aria-hidden="true"><path d="M.8.8l10.400 10.400M11.200.8L.8 11.200" stroke="#222" strokeWidth="1.200" /></svg>
      </button>
    </header>
  );
}

// inner dividers for each of the pane arrangements in the toolbar
const layouts = [
  "M8 3v9M3 7.500h10",
  "M3 7.500h10M8 7.500V12",
  "M3 7.500h10M8 3v4.500",
  "M8 3v9",
  "M3 7.500h10",
  "M5.500 3v9M8 3v9M10.500 3v9",
  "M3 5.500h10M3 7.500h10M3 9.500h10",
  "M5.500 3v9M8 3v9",
  "M3 5.500h10M3 8h10",
  "M7.500 3v9M7.500 7.500H13",
  "M8 3v9M3 7.500h5",
  "",
];

function LayoutIcon({ lines }: { lines: string }) {
  return (
    <svg viewBox="0 0 16 15" className="h-[15px] w-4 shrink-0" fill="none" aria-hidden="true">
      <rect x="3" y="2.500" width="11.500" height="11.500" rx="1" fill="#333" />
      <rect x="2" y="1.500" width="11" height="11" rx="1" fill="#d2d2d2" stroke="#5c5c5c" strokeWidth="1.300" />
      <path d={lines} stroke="#666" strokeWidth="1.200" />
    </svg>
  );
}

function CurrentLayoutIcon() {
  return (
    <svg viewBox="0 0 18 17" className="h-[17px] w-[18px] shrink-0" aria-hidden="true">
      <rect x="3" y="3" width="14" height="13" rx="1" fill="#333" />
      <rect x="1.500" y="1.500" width="14" height="13" rx="1" fill="#8f8f8f" stroke="#757575" />
      <path d="M6 3.500h3.500v4H6zM10.800 3.500h3.500v4h-3.500zM6 8.700h3.500v4H6zM10.800 8.700h3.500v4h-3.500z" fill="#dedede" />
    </svg>
  );
}

const favoriteMenu = [
  { label: "즐겨찾기에 추가...", icon: "staradd", current: true },
  { label: "즐겨찾기 구성...", icon: "pad" },
  { label: "이 보기 관리", icon: "zoom" },
  { label: "폴더찾기", icon: "gears" },
];

function FavoritesMenu() {
  return (
    <div role="menu" className="absolute top-[23px] left-px z-20 h-[164px] w-[329px] border border-[#a5a5a5] bg-[#efefef] shadow-[2px_2px_2px_#888]">
      {favoriteMenu.map((item) => (
        <button
          key={item.label}
          type="button"
          role="menuitem"
          className={clsx(
            "flex h-[19px] w-full items-center gap-1 pl-1",
            item.current && "bg-gradient-to-b from-[#0a6cbd] to-[#073f70] text-white",
          )}
        >
          <Icon name={item.icon} />
          {item.label}
        </button>
      ))}
      <hr className="mt-1 mr-2.5 ml-1.5 border-[#9f9f9f]" />
      <button type="button" role="menuitem" className="mt-1.5 flex h-[22px] w-full items-center gap-1 pr-2 pl-[3px]">
        <Icon name="folder" size="size-5" />
        <Label text="Quick-Link" />
        <svg viewBox="0 0 6 10" className="ml-auto h-2.5 w-1.5" aria-hidden="true"><path d="M1 .5v9L5.500 5z" fill="#111" /></svg>
      </button>
      <hr className="mt-0.5 mr-1 ml-1 border-[#bcbcbc]" />
      <button type="button" role="menuitem" disabled className="mt-1.5 block h-5 pl-[22px] text-[#b9b9b9]">[Ctrl]로 새 Q-Dir</button>
      <button type="button" role="menuitem" disabled className="block h-5 pl-[22px] text-[#b9b9b9]">SHIFT=겹쳐쓰기//DEL=삭제</button>
      <span className="pointer-events-none absolute -top-[3px] -left-[3px] h-[26px] w-[333px] border-4 border-[#d96244]" />
      <svg viewBox="0 0 72 72" className="pointer-events-none absolute top-[26px] left-[334px] size-[72px]" aria-hidden="true">
        <path d="M1 1h48l15 15H31l37 39-12 12-39-38v33L1 47z" fill="#d96244" />
      </svg>
    </div>
  );
}

function MenuBar() {
  return (
    <nav className="flex h-[25px] shrink-0 items-center bg-gradient-to-b from-[#ebebeb] to-[#a6a6a6] pl-[5px]">
      <button type="button" className="w-[52px] text-left">파일(F)</button>
      <button type="button" className="w-[52px] text-left">편집(E)</button>
      <button type="button" className="w-[45px] text-left">보기(V)</button>
      <div className="relative">
        <button type="button" aria-haspopup="menu" aria-expanded="true" className="block h-6 w-[79px] border border-[#7fb7e6] bg-[#cce8ff] pl-[7px] text-left whitespace-nowrap">
          즐겨찾기(A)
        </button>
        <FavoritesMenu />
        <span className="pointer-events-none absolute -top-px -left-[3px] z-30 h-[27px] w-[84px] border-4 border-[#d96244]" />
      </div>
      <button type="button" className="ml-2 w-[53px] text-left">기타(X)</button>
      <button type="button">제품정보(I)</button>
      <div className="ml-auto flex items-center pr-1 pb-1">
        <button type="button" aria-label="네트워크" className="flex items-center gap-1.5"><Icon name="network" /><Caret /></button>
        <button type="button" aria-label="배치" className="ml-2 flex items-center gap-1.5"><CurrentLayoutIcon /><Caret /></button>
        <div className="ml-[5px] flex w-[264px] justify-between">
          {layouts.map((lines, index) => (
            <button key={index} type="button" aria-label={`배치 ${index + 1}`}>
              <LayoutIcon lines={lines} />
            </button>
          ))}
        </div>
        <button type="button" aria-label="인터넷" className="ml-1.5"><Icon name="inet" /></button>
        <button type="button" className="ml-[3px] flex items-center gap-1">내 ...<Caret /></button>
        <button type="button" aria-label="인쇄" className="ml-[5px]"><Icon name="printer" /></button>
        <button type="button" aria-label="즐겨찾기 추가" className="ml-1"><Icon name="staradd" /></button>
        <button type="button" aria-label="확대" className="ml-1"><Icon name="zoom" /></button>
        <button type="button" aria-label="메모" className="ml-[5px]"><Icon name="pad" size="size-4" /></button>
      </div>
    </nav>
  );
}

export default function App() {
  return (
    <div className="flex h-screen flex-col overflow-hidden rounded-lg border-x-2 border-t-2 border-b border-[#ababab] bg-[#f0f0f0] font-['Noto_Sans_CJK_KR',sans-serif] text-[14px] leading-[18px] text-[#333]">
      <Gradients />
      <TitleBar />
      <MenuBar />
      <div className="flex min-h-0 flex-1">
        <Sidebar />
        <main className="grid min-w-0 flex-1 grid-cols-2 grid-rows-2 gap-x-1.5 gap-y-[5px]">
          <Pane
            id="path-tools"
            path="C:₩Users₩kisha₩OneDrive₩유틸₩"
            pathIcon="folder"
            tabs={[]}
            columns={[{ label: "이름", width: "w-[333px]" }, { label: "상태", width: "w-[98px]" }, { label: "수정한" }]}
            entries={installers}
            scroll="w-[240px]"
            count="12 객체들"
            extraTools
          />
          <Pane
            id="path-library"
            canGoBack
            path="라이브러리"
            pathIcon="library"
            tabs={[{ label: "라이브러리", icon: "library", current: true }]}
            columns={[{ label: "이름", width: "w-[196px]", sort: "asc" }, { label: "수정한 날짜", width: "w-[177px]" }, { label: "유형" }]}
            entries={libraries}
            scroll="w-[332px]"
            count="6 객체들"
          />
          <Pane
            id="path-pc"
            active
            path="내 PC"
            pathIcon="monitor"
            tabs={[
              { label: "내 PC", icon: "monitor" },
              { label: "로컬 디스크 ( ...", icon: "diskc" },
              { label: "내 PC", icon: "monitor", current: true },
            ]}
            columns={[{ label: "이름", width: "w-[196px]", sort: "asc" }, { label: "종류", width: "w-[246px]" }, { label: "전체" }]}
            entries={drives}
            tall
            scroll="w-[272px]"
            count="2 객체들"
            extraTools
          />
          <Pane
            id="path-downloads"
            canGoBack
            newFolder
            path="C:₩Users₩kisha₩OneDrive₩다운로드"
            pathIcon="download"
            tabs={[{ label: "다운로드", icon: "download", current: true }]}
            columns={[{ label: "이름", width: "w-[334px]" }, { label: "수정한 날짜", width: "w-[177px]", sort: "desc" }]}
            entries={downloads}
            tall
            vertical
            scroll="w-[249px]"
            count="82 객체들"
          />
        </main>
      </div>
      <footer className="h-[27px] shrink-0 bg-gradient-to-b from-[#fafafa] to-[#b3b3b3]" />
    </div>
  );
}
